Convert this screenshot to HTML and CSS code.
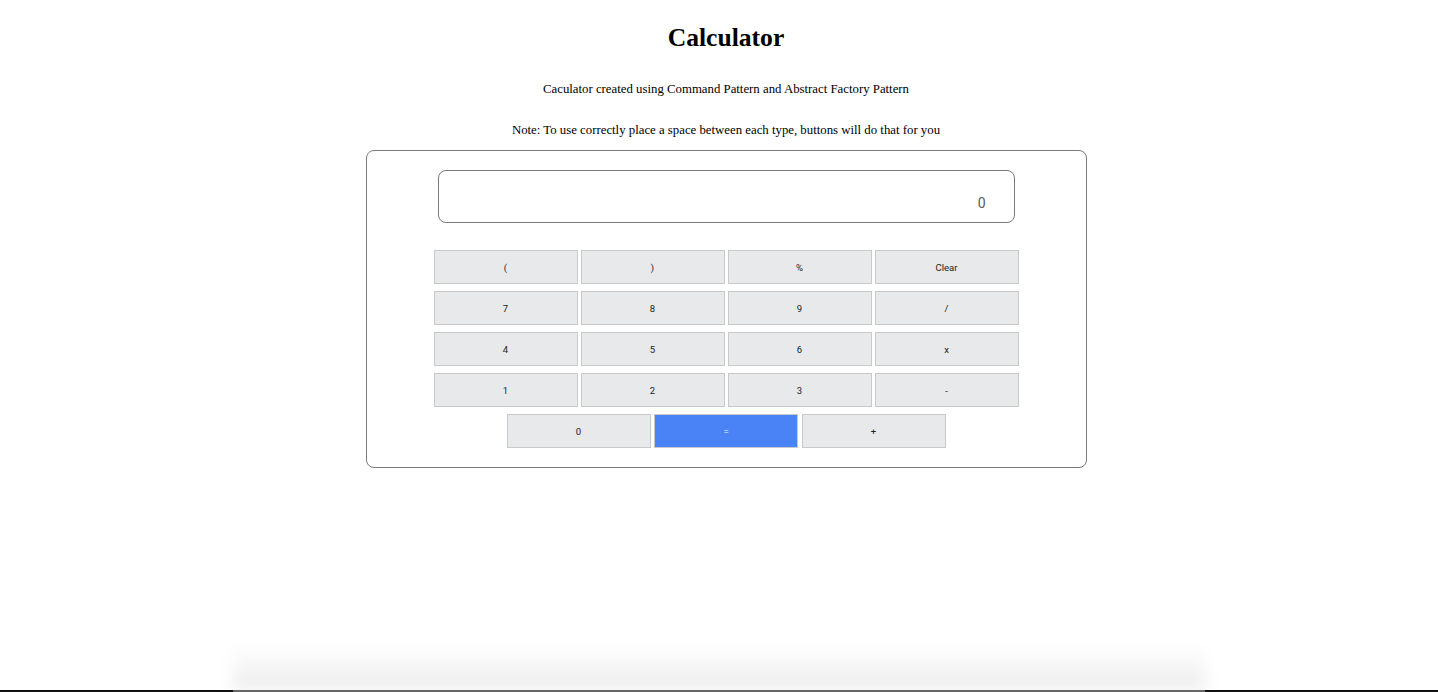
FILE: index.html
```html
<!DOCTYPE html>
<html lang="en">
<head>
<meta charset="utf-8">
<title>Calculator</title>
<link rel="stylesheet" href="styles.css">
</head>
<body>
<main class="page">
  <h1 class="title">Calculator</h1>
  <p class="subtitle">Caculator created using Command Pattern and Abstract Factory Pattern</p>
  <p class="note">Note: To use correctly place a space between each type, buttons will do that for you</p>
  <section class="calculator">
    <div class="display"><span class="display-value">0</span></div>
    <div class="keys">
      <button class="key">(</button>
      <button class="key">)</button>
      <button class="key">%</button>
      <button class="key">Clear</button>
      <button class="key">7</button>
      <button class="key">8</button>
      <button class="key">9</button>
      <button class="key">/</button>
      <button class="key">4</button>
      <button class="key">5</button>
      <button class="key">6</button>
      <button class="key">x</button>
      <button class="key">1</button>
      <button class="key">2</button>
      <button class="key">3</button>
      <button class="key">-</button>
    </div>
    <div class="keys-last">
      <button class="key">0</button>
      <button class="key key-equals">=</button>
      <button class="key">+</button>
    </div>
  </section>
</main>
<div class="window-shadow"></div>
<div class="window-edge"></div>
</body>
</html>
```

FILE: styles.css
```css
html, body {
  margin: 0;
  padding: 0;
  background: #ffffff;
}

body {
  padding-left: 14px;
  font-family: "Liberation Serif", "Times New Roman", serif;
  color: #000;
  height: 692px;
  overflow: hidden;
}

.page {
  display: flex;
  flex-direction: column;
  align-items: center;
}

.title {
  margin: 23px 0 0;
  font-size: 25.6px;
  line-height: 30px;
  font-weight: bold;
}

.subtitle {
  margin: 28px 0 0;
  font-size: 12.8px;
  line-height: 16px;
}

.note {
  margin: 25px 0 0;
  font-size: 12.8px;
  line-height: 16px;
}

.calculator {
  margin-top: 12px;
  box-sizing: border-box;
  width: 721px;
  height: 318px;
  border: 1px solid #7a7a7a;
  border-radius: 8px;
  padding-top: 19px;
  display: flex;
  flex-direction: column;
  align-items: center;
}

.display {
  box-sizing: border-box;
  width: 577px;
  height: 53px;
  border: 1px solid #7a7a7a;
  border-radius: 8px;
  display: flex;
  justify-content: flex-end;
  align-items: flex-end;
  padding: 0 28px 11px 0;
}

.display-value {
  font-family: Roboto, "Liberation Sans", sans-serif;
  font-size: 14px;
  line-height: 16px;
  color: #5a5a5a;
}

.keys {
  margin-top: 27px;
  display: grid;
  grid-template-columns: repeat(4, 144px);
  grid-auto-rows: 34px;
  column-gap: 3px;
  row-gap: 7px;
}

.keys-last {
  margin-top: 7px;
  display: grid;
  grid-template-columns: repeat(3, 144px);
  grid-auto-rows: 34px;
  column-gap: 3.5px;
}

.key {
  box-sizing: border-box;
  margin: 0;
  padding: 0;
  border: 1px solid #c9c9c9;
  border-radius: 0;
  background: #e8e9eb;
  font-family: Roboto, "Liberation Sans", sans-serif;
  font-size: 9.5px;
  color: #222;
}

.key-equals {
  background: #4a83f5;
  color: #fff;
}

.window-shadow {
  position: fixed;
  left: 233px;
  right: 233px;
  bottom: 2px;
  height: 45px;
  background: linear-gradient(to bottom, rgba(0,0,0,0), rgba(0,0,0,0.08));
  filter: blur(8px);
  pointer-events: none;
}

.window-edge {
  position: fixed;
  left: 0;
  right: 0;
  bottom: 0;
  height: 2px;
  background: linear-gradient(to right, #111 0, #111 233px, #666 233px, #666 1205px, #111 1205px);
  pointer-events: none;
}
```
